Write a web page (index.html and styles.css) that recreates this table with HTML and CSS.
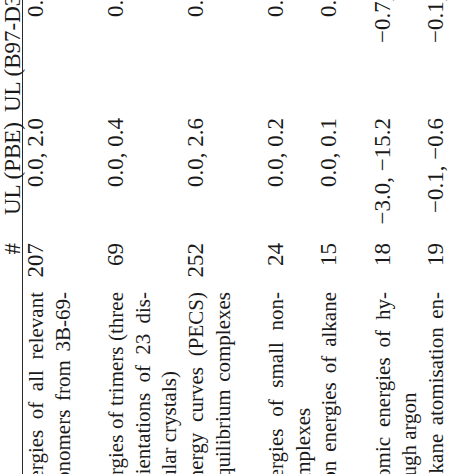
FILE: index.html
```html
<!DOCTYPE html>
<html>
<head>
<meta charset="utf-8">
<link rel="stylesheet" href="styles.css">
</head>
<body>
<div class="stage">
  <div class="page">
    <div class="table">
      <div class="row head">
        <div class="c desc"></div>
        <div class="c num">#</div>
        <div class="c pbe">UL (PBE)</div>
        <div class="c b97">UL (B97-D3)</div>
      </div>
      <div class="row">
        <div class="c desc"><span class="ln">binding energies of all relevant</span><span class="ln">pairs of monomers from 3B-69-</span><span class="ln last">TRIM</span></div>
        <div class="c num">207</div>
        <div class="c pbe">0.0, 2.0</div>
        <div class="c b97">0.0, 0.7</div>
      </div>
      <div class="row">
        <div class="c desc"><span class="ln">binding energies of trimers (three</span><span class="ln">different orientations of 23 dis-</span><span class="ln last">tinct molecular crystals)</span></div>
        <div class="c num">69</div>
        <div class="c pbe">0.0, 0.4</div>
        <div class="c b97">0.0, 0.2</div>
      </div>
      <div class="row">
        <div class="c desc"><span class="ln">potential energy curves (PECS)</span><span class="ln">of the 21 equilibrium complexes</span><span class="ln last">(12 points)</span></div>
        <div class="c num">252</div>
        <div class="c pbe">0.0, 2.6</div>
        <div class="c b97">0.0, 0.9</div>
      </div>
      <div class="row">
        <div class="c desc"><span class="ln">binding energies of small non-</span><span class="ln last">covalent complexes</span></div>
        <div class="c num">24</div>
        <div class="c pbe">0.0, 0.2</div>
        <div class="c b97">0.0, 0.1</div>
      </div>
      <div class="row">
        <div class="c desc"><span class="ln">conformation energies of alkane</span><span class="ln last">conformers</span></div>
        <div class="c num">15</div>
        <div class="c pbe">0.0, 0.1</div>
        <div class="c b97">0.0, 0.1</div>
      </div>
      <div class="row">
        <div class="c desc"><span class="ln">absolute atomic energies of hy-</span><span class="ln last">drogen through argon</span></div>
        <div class="c num">18</div>
        <div class="c pbe">−3.0, −15.2</div>
        <div class="c b97">−0.7, −1.3</div>
      </div>
      <div class="row">
        <div class="c desc"><span class="ln">branched alkane atomisation en-</span><span class="ln last">ergies</span></div>
        <div class="c num">19</div>
        <div class="c pbe">−0.1, −0.6</div>
        <div class="c b97">−0.1, −0.3</div>
      </div>
    </div>
  </div>
</div>
</body>
</html>
```
FILE: styles.css
```css
html, body {
  margin: 0;
  padding: 0;
  background: #ffffff;
}

.stage {
  width: 474px;
  height: 474px;
  overflow: hidden;
  background: #ffffff;
}

.page {
  width: 474px;
  height: 474px;
  transform: rotate(-90deg);
}

.table {
  width: 626px;
  margin-left: -100px;
  font-family: "Liberation Serif", "Times New Roman", serif;
  font-size: 23px;
  line-height: 26.667px;
  color: #1a1a1a;
}

.row {
  display: grid;
  grid-template-columns: 282px 49px 125px 170px;
}

.head {
  height: 22px;
  border-bottom: 1px solid #2a2a2a;
}

.c {
  white-space: nowrap;
}

.desc {
  white-space: normal;
  font-size: 21px;
}

.num,
.pbe,
.b97 {
  text-align: right;
}

.head .pbe {
  padding-right: 4px;
}

.head .b97 {
  text-align: left;
  padding-left: 6px;
}

.ln {
  display: block;
  text-align: justify;
  text-align-last: justify;
}

.ln.last {
  text-align-last: left;
}
```
